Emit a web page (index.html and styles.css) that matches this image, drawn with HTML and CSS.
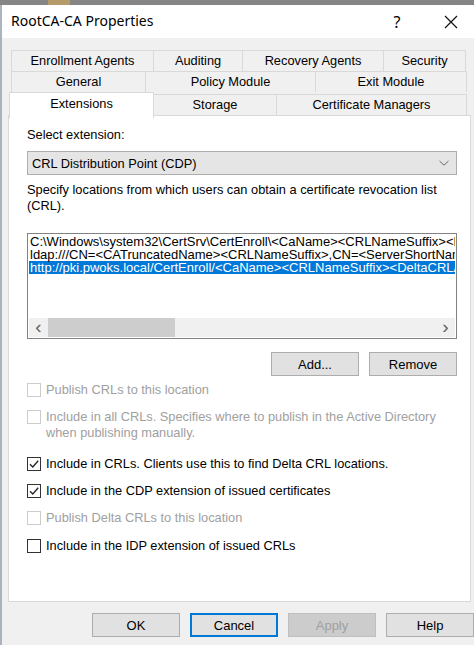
FILE: index.html
```html
<!DOCTYPE html>
<html lang="en">
<head>
  <meta charset="UTF-8" />
  <title>RootCA-CA Properties</title>
  <link rel="stylesheet" href="styles.css">
</head>
<body>

  <!-- window behind the dialog -->
  <div class="behind">
    <span class="behind-icon"></span>
  </div>

  <div class="dialog">
    <div class="title-bar">
      <span class="title">RootCA-CA Properties</span>
      <span class="title-btn help">?</span>
      <span class="title-btn close">
        <svg width="14" height="14" viewBox="0 0 14 14"><path d="M1 1 L13 13 M13 1 L1 13" stroke="#111" stroke-width="1.2" fill="none"/></svg>
      </span>
    </div>

    <!-- TABS -->
    <div class="tabs">
      <div class="tab-row">
        <div class="tab w-enroll">Enrollment Agents</div>
        <div class="tab w-audit">Auditing</div>
        <div class="tab w-recovery">Recovery Agents</div>
        <div class="tab w-security">Security</div>
      </div>
      <div class="tab-row">
        <div class="tab w-general">General</div>
        <div class="tab w-policy">Policy Module</div>
        <div class="tab w-exit">Exit Module</div>
      </div>
      <div class="tab-row front">
        <div class="tab selected">Extensions</div>
        <div class="tab w-storage">Storage</div>
        <div class="tab w-certman">Certificate Managers</div>
      </div>
    </div>

    <div class="panel">
      <div class="label">Select extension:</div>
      <div class="combo">
        <span>CRL Distribution Point (CDP)</span>
        <svg width="12" height="8" viewBox="0 0 12 8"><path d="M1.5 2 L6 6.2 L10.5 2" stroke="#666" stroke-width="1" fill="none"/></svg>
      </div>

      <p class="hint">Specify locations from which users can obtain a certificate revocation list (CRL).</p>

      <div class="listbox">
        <div class="list-items">
          <div class="item">C:\Windows\system32\CertSrv\CertEnroll\&lt;CaName&gt;&lt;CRLNameSuffix&gt;&lt;DeltaCRLAllowed&gt;.crl</div>
          <div class="item">ldap:///CN=&lt;CATruncatedName&gt;&lt;CRLNameSuffix&gt;,CN=&lt;ServerShortName&gt;,CN=CDP</div>
          <div class="item active">http://pki.pwoks.local/CertEnroll/&lt;CaName&gt;&lt;CRLNameSuffix&gt;&lt;DeltaCRLAllowed&gt;.crl</div>
        </div>
        <div class="hscroll">
          <span class="arrow">&#x2039;</span>
          <div class="track"><div class="thumb"></div></div>
          <span class="arrow">&#x203A;</span>
        </div>
      </div>

      <div class="list-buttons">
        <button class="btn">Add...</button>
        <button class="btn">Remove</button>
      </div>

      <div class="options">
        <label class="check disabled">
          <span class="box"></span>
          <span>Publish CRLs to this location</span>
        </label>
        <label class="check disabled">
          <span class="box"></span>
          <span>Include in all CRLs. Specifies where to publish in the Active Directory when publishing manually.</span>
        </label>
        <label class="check spaced">
          <span class="box"><svg width="12" height="12" viewBox="0 0 12 12"><path d="M2 6.2 L4.8 9 L10.2 2.8" stroke="#222" stroke-width="1.3" fill="none"/></svg></span>
          <span>Include in CRLs. Clients use this to find Delta CRL locations.</span>
        </label>
        <label class="check">
          <span class="box"><svg width="12" height="12" viewBox="0 0 12 12"><path d="M2 6.2 L4.8 9 L10.2 2.8" stroke="#222" stroke-width="1.3" fill="none"/></svg></span>
          <span>Include in the CDP extension of issued certificates</span>
        </label>
        <label class="check disabled">
          <span class="box"></span>
          <span>Publish Delta CRLs to this location</span>
        </label>
        <label class="check last">
          <span class="box"></span>
          <span>Include in the IDP extension of issued CRLs</span>
        </label>
      </div>
    </div>

    <div class="footer">
      <button class="btn">OK</button>
      <button class="btn focused">Cancel</button>
      <button class="btn" disabled>Apply</button>
      <button class="btn">Help</button>
    </div>
  </div>

</body>
</html>
```

FILE: styles.css
```css
* {
  box-sizing: border-box;
}

body {
  margin: 0;
  width: 474px;
  height: 645px;
  overflow: hidden;
  font-family: 'Liberation Sans', Arial, sans-serif;
  font-size: 12.8px;
  color: #000;
  background: #f0f0f0;
}

.behind {
  height: 5px;
  background: #858585;
}

.behind-icon {
  display: block;
  width: 22px;
  height: 5px;
  margin-left: 48px;
  background: #b59a6a;
}

.dialog {
  height: 640px;
  background: #f0f0f0;
  border-left: 2px solid #a9b4bf;
}

.title-bar {
  height: 33px;
  background: #fff;
  display: flex;
  align-items: center;
  padding-left: 9px;
}

.title {
  flex: 1;
  font-family: 'Noto Sans', 'Open Sans', sans-serif;
  font-size: 14px;
  padding-bottom: 2px;
}

.title-btn {
  display: flex;
  justify-content: center;
  align-items: center;
  height: 33px;
  font-family: 'Noto Sans', sans-serif;
  font-size: 16px;
}

.title-btn.help {
  width: 20px;
  margin-right: 34px;
}

.title-btn.close {
  width: 20px;
  margin-right: 13px;
}

/* tabs */
.tabs {
  margin-top: 12px;
  padding-left: 7px;
}

.tab-row {
  display: flex;
  padding-left: 3px;
}

.tab {
  height: 21px;
  line-height: 20px;
  text-align: center;
  border: 1px solid #d9d9d9;
  border-bottom: none;
  margin-left: -1px;
  background: #f0f0f0;
  white-space: nowrap;
}

.w-enroll { width: 143px; }
.w-audit { width: 90px; }
.w-recovery { width: 142px; }
.w-security { width: 83px; }
.w-general { width: 135px; }
.w-policy { width: 171px; }
.w-exit { width: 152px; }
.w-storage { width: 124px; }
.w-certman { width: 191px; }

.tab-row.front {
  padding-left: 0;
  height: 23px;
  align-items: flex-end;
}

.tab.selected {
  width: 145px;
  height: 26px;
  margin-left: 0;
  margin-bottom: -3px;
  line-height: 22px;
  background: #fff;
  position: relative;
  z-index: 2;
}

/* panel */
.panel {
  width: 463px;
  height: 487px;
  margin-left: 6px;
  background: #fff;
  border: 1px solid #d9d9d9;
  padding: 11px 13px 0 18px;
}

.label {
  line-height: 16px;
}

.combo {
  margin-top: 8px;
  height: 24px;
  background: #e5e5e5;
  border: 1px solid #adadad;
  display: flex;
  align-items: center;
  justify-content: space-between;
  padding: 0 6px 0 4px;
}

.hint {
  margin: 7px 0 0;
  line-height: 16px;
}

.listbox {
  margin-top: 19px;
  height: 106px;
  border: 1px solid #828282;
  display: flex;
  flex-direction: column;
  justify-content: space-between;
  padding: 1px;
}

.list-items {
  overflow: hidden;
}

.item {
  white-space: nowrap;
  line-height: 13px;
  font-size: 13px;
  padding-left: 1px;
  height: 13px;
}

.item.active {
  background: #0078d7;
  color: #fff;
}

.hscroll {
  height: 19px;
  background: #f0f0f0;
  display: flex;
  align-items: center;
}

.hscroll .arrow {
  width: 19px;
  text-align: center;
  font-size: 19px;
  line-height: 17px;
  color: #606060;
  padding-bottom: 3px;
}

.track {
  flex: 1;
  height: 19px;
}

.thumb {
  width: 127px;
  height: 19px;
  background: #cdcdcd;
}

.list-buttons {
  display: flex;
  justify-content: flex-end;
  gap: 10px;
  margin-top: 13px;
}

.btn {
  width: 88px;
  height: 24px;
  font-family: 'Liberation Sans', Arial, sans-serif;
  font-size: 13px;
  background: #e1e1e1;
  border: 1px solid #adadad;
  color: #000;
  padding: 0;
}

.btn.focused {
  border: 2px solid #0078d7;
}

.btn:disabled {
  background: #cccccc;
  border-color: #bfbfbf;
  color: #a0a0a0;
}

/* checkboxes */
.options {
  margin-top: 6px;
}

.check {
  display: flex;
  align-items: flex-start;
  gap: 5px;
  line-height: 16px;
  margin-bottom: 11px;
  padding-right: 10px;
}

.check.spaced {
  margin-top: 15px;
}

.check.last {
  margin-top: 12px;
}

.check .box {
  flex: none;
  width: 14px;
  height: 14px;
  margin-top: 1px;
  border: 1px solid #333;
  background: #fff;
  display: flex;
  align-items: center;
  justify-content: center;
}

.check.disabled {
  color: #a0a0a0;
}

.check.disabled .box {
  border-color: #cccccc;
}

/* dialog buttons */
.footer {
  display: flex;
  justify-content: flex-end;
  gap: 10px;
  padding-top: 11px;
}
```
